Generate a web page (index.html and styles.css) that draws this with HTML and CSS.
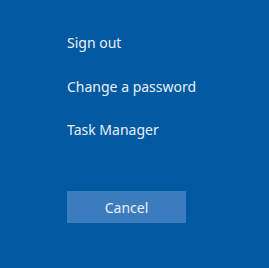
FILE: index.html
```html
<!DOCTYPE html>
<html lang="en">
<head>
  <meta charset="UTF-8" />
  <title>Security options</title>
  <link rel="stylesheet" href="styles.css">
</head>
<body>
  <div class="options">
    <a href="#">Sign out</a>
    <a href="#">Change a password</a>
    <a href="#">Task Manager</a>
  </div>
  <button class="cancel">Cancel</button>
</body>
</html>
```
FILE: styles.css
```css
body {
    margin: 0;
    padding: 32px 0 0 67px;
    background-color: #0159a1;
    font-family: "Noto Sans", "Open Sans", sans-serif;
    height: 268px;
    box-sizing: border-box;
}

.options {
    display: flex;
    flex-direction: column;
    gap: 22.5px;
}

.options a {
    color: #e9f0f8;
    text-decoration: none;
    font-size: 14px;
    line-height: 21px;
}

.cancel {
    margin-top: 51px;
    width: 119px;
    height: 32px;
    border: none;
    background-color: #3a7cbd;
    color: #e9f0f8;
    font-family: "Noto Sans", "Open Sans", sans-serif;
    font-size: 14px;
    padding: 0;
}
```
